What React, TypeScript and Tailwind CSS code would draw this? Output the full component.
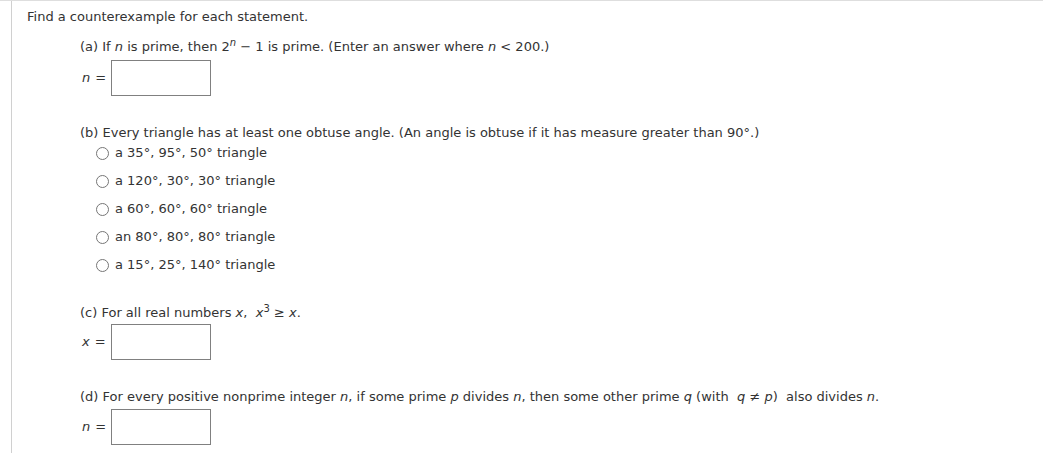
import React from 'react';

const font = { fontFamily: "'DejaVu Sans', Verdana, sans-serif" };

function AnswerBox({ label }: { label: string }) {
  return (
    <div className="flex items-center ml-[2px]">
      <span className="italic">{label}</span>
      <span className="ml-[5px] mr-[5px]">=</span>
      <div className="w-[100px] h-[36px] border border-[#808080] bg-white" />
    </div>
  );
}

const options = [
  'a 35°, 95°, 50° triangle',
  'a 120°, 30°, 30° triangle',
  'a 60°, 60°, 60° triangle',
  'an 80°, 80°, 80° triangle',
  'a 15°, 25°, 140° triangle',
];

export default function App() {
  return (
    <div className="w-[1043px] h-[453px] bg-white border-t border-[#dedede] text-[#333] text-[13px] leading-[16px]" style={font}>
      <div className="ml-[11px] h-full border-l border-[#d0d0d0] pl-[15px] pt-[8px]">
        <p>Find a counterexample for each statement.</p>

        <div className="ml-[53px]">
          <p className="mt-[14px]">
            (a) If <i>n</i> is prime, then 2<sup className="italic text-[10px]">n</sup> − 1 is prime. (Enter an answer where <i>n</i> &lt; 200.)
          </p>
          <div className="mt-[5px]">
            <AnswerBox label="n" />
          </div>

          <p className="mt-[29px]">
            (b) Every triangle has at least one obtuse angle. (An angle is obtuse if it has measure greater than 90°.)
          </p>
          <div className="mt-[4px] ml-[16px] flex flex-col gap-[12px]">
            {options.map((o) => (
              <label key={o} className="flex items-center gap-[6px]">
                <span className="w-[13px] h-[13px] rounded-full border border-[#767676] bg-white" />
                <span>{o}</span>
              </label>
            ))}
          </div>

          <p className="mt-[32px]">
            (c) For all real numbers <i>x</i>,&nbsp; <i>x</i>
            <sup className="text-[10px]">3</sup> ≥ <i>x</i>.
          </p>
          <div className="mt-[3px]">
            <AnswerBox label="x" />
          </div>

          <p className="mt-[29px]">
            (d) For every positive nonprime integer <i>n</i>, if some prime <i>p</i> divides <i>n</i>, then some other prime <i>q</i> (with&nbsp; <i>q</i> ≠ <i>p</i>)&nbsp; also divides <i>n</i>.
          </p>
          <div className="mt-[4px]">
            <AnswerBox label="n" />
          </div>
        </div>
      </div>
    </div>
  );
}
